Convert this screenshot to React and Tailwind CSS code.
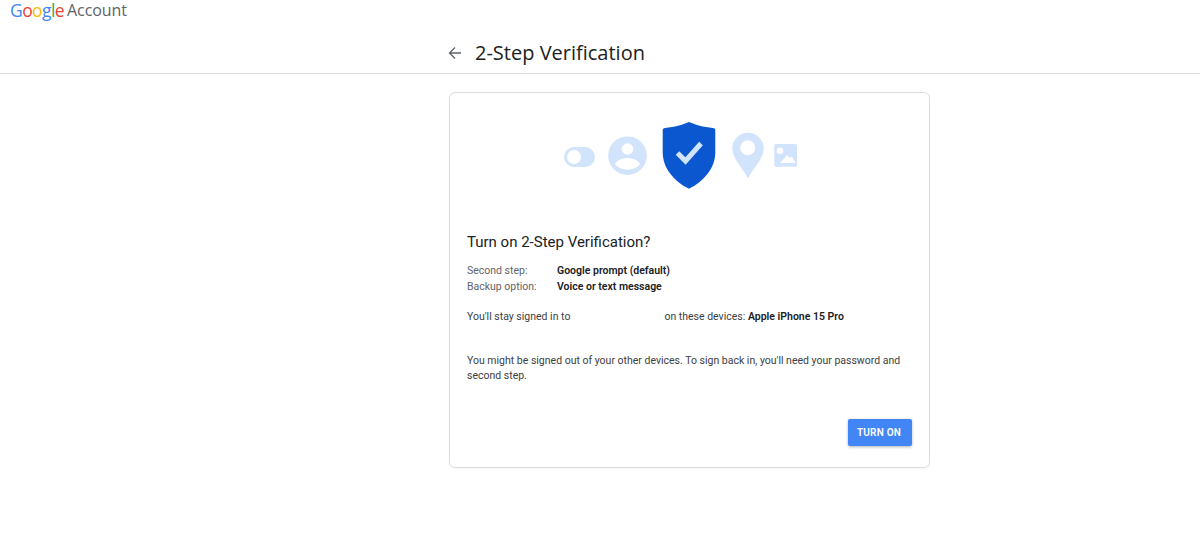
import React from "react";

function Art() {
  return (
    <svg width="236" height="70" viewBox="0 0 236 70" className="block">
      {/* toggle */}
      <rect x="1" y="25" width="31" height="20" rx="10" fill="#d2e3fc" />
      <circle cx="11" cy="35" r="7" fill="#fff" />
      {/* person */}
      <circle cx="64.500" cy="33.700" r="19.300" fill="#d2e3fc" />
      <circle cx="64.500" cy="27" r="5.800" fill="#fff" />
      <path d="M52 42.300c1.500-4 7-6.300 12.500-6.300s11 2.300 12.500 6.300c-3 3.600-7.400 5.400-12.500 5.400s-9.500-1.800-12.500-5.400z" fill="#fff" />
      {/* shield */}
      <path d="M126 0 C133 3 140 5 150 6 C151.500 6.200 152.300 7.100 152.300 8.500 L152.300 30.500 C152.300 46.500 140 60 126 66.700 C112 60 99.700 46.500 99.700 30.500 L99.700 8.500 C99.700 7.100 100.500 6.200 102 6 C112 5 119 3 126 0 Z" fill="#0b57d0" />
      <path d="M114.500 31 L122.500 39 L138 21.500" fill="none" stroke="#d2e3fc" strokeWidth="5" />
      {/* pin */}
      <path d="M185 10.700 C176 10.700 169.300 18 169.300 26 C169.300 37 179 45 185 56.300 C191 45 200.700 37 200.700 26 C200.700 18 194 10.700 185 10.700 Z" fill="#d2e3fc" />
      <circle cx="184.700" cy="25.700" r="7.500" fill="#fff" />
      {/* image */}
      <rect x="211.300" y="22" width="22.700" height="22.700" rx="1.500" fill="#d2e3fc" />
      <circle cx="217" cy="28.700" r="3.300" fill="#fff" />
      <path d="M217 41 L224.300 33 L226.800 36 L229 34.500 L232.500 41 Z" fill="#fff" />
    </svg>
  );
}

export default function App() {
  return (
    <div className="min-h-[542px] bg-white font-['Roboto',sans-serif]">
      <header className="h-[74px] border-b border-[#dadce0]">
        <div className="flex h-[20px] items-center gap-[3px] pl-[10px] font-['Open_Sans',sans-serif] text-[16px] leading-[20px]">
          <span className="text-[17.5px] font-medium tracking-[-0.6px]">
            <span className="text-[#4285f4]">G</span>
            <span className="text-[#ea4335]">o</span>
            <span className="text-[#fbbc05]">o</span>
            <span className="text-[#4285f4]">g</span>
            <span className="text-[#34a853]">l</span>
            <span className="text-[#ea4335]">e</span>
          </span>
          <span className="tracking-[-0.05px] text-[#5f6368]">Account</span>
        </div>
        <div className="mt-[17px] flex h-[32px] items-center pl-[448px]">
          <svg width="14" height="14" viewBox="0 0 14 14" className="mr-[13px]" fill="none" stroke="#5f6368" strokeWidth="1.300">
            <path d="M13 7H1.500M7 1.500 1.500 7 7 12.500" />
          </svg>
          <h1 className="font-['Open_Sans',sans-serif] text-[20px] leading-[32px] text-[#202124]">2-Step Verification</h1>
        </div>
      </header>
      <main className="ml-[449px] mt-[18px] flex h-[376px] w-[481px] flex-col rounded-[6px] border border-[#dadce0] px-[17px] pb-[21px] shadow-[0_1px_2px_rgba(60,64,67,0.06)]">
        <div className="ml-[96px] mt-[29px]">
          <Art />
        </div>
        <h2 className="mt-[40px] text-[15px] leading-[20px] text-[#202124]">Turn on 2-Step Verification?</h2>
        <div className="mt-[11px] grid grid-cols-[90px_1fr] text-[10.5px] leading-[16px]">
          <span className="text-[#5f6368]">Second step:</span>
          <span className="font-semibold text-[#202124]">Google prompt (default)</span>
          <span className="text-[#5f6368]">Backup option:</span>
          <span className="font-semibold text-[#202124]">Voice or text message</span>
        </div>
        <p className="mt-[14px] text-[10.5px] leading-[16px] text-[#3c4043]">
          You'll stay signed in to<span className="inline-block w-[94px]" />on these devices:{" "}
          <span className="font-semibold text-[#202124]">Apple iPhone 15 Pro</span>
        </p>
        <p className="mt-[28px] text-[10.5px] leading-[15px] text-[#3c4043]">
          You might be signed out of your other devices. To sign back in, you'll need your password and second step.
        </p>
        <div className="mt-auto flex justify-end">
          <button className="h-[27px] w-[64px] rounded-[2px] bg-[#4285f4] pr-[2px] text-[10px] font-semibold tracking-[0.2px] text-white shadow-[0_1px_3px_rgba(60,64,67,0.4)]">
            TURN ON
          </button>
        </div>
      </main>
    </div>
  );
}
